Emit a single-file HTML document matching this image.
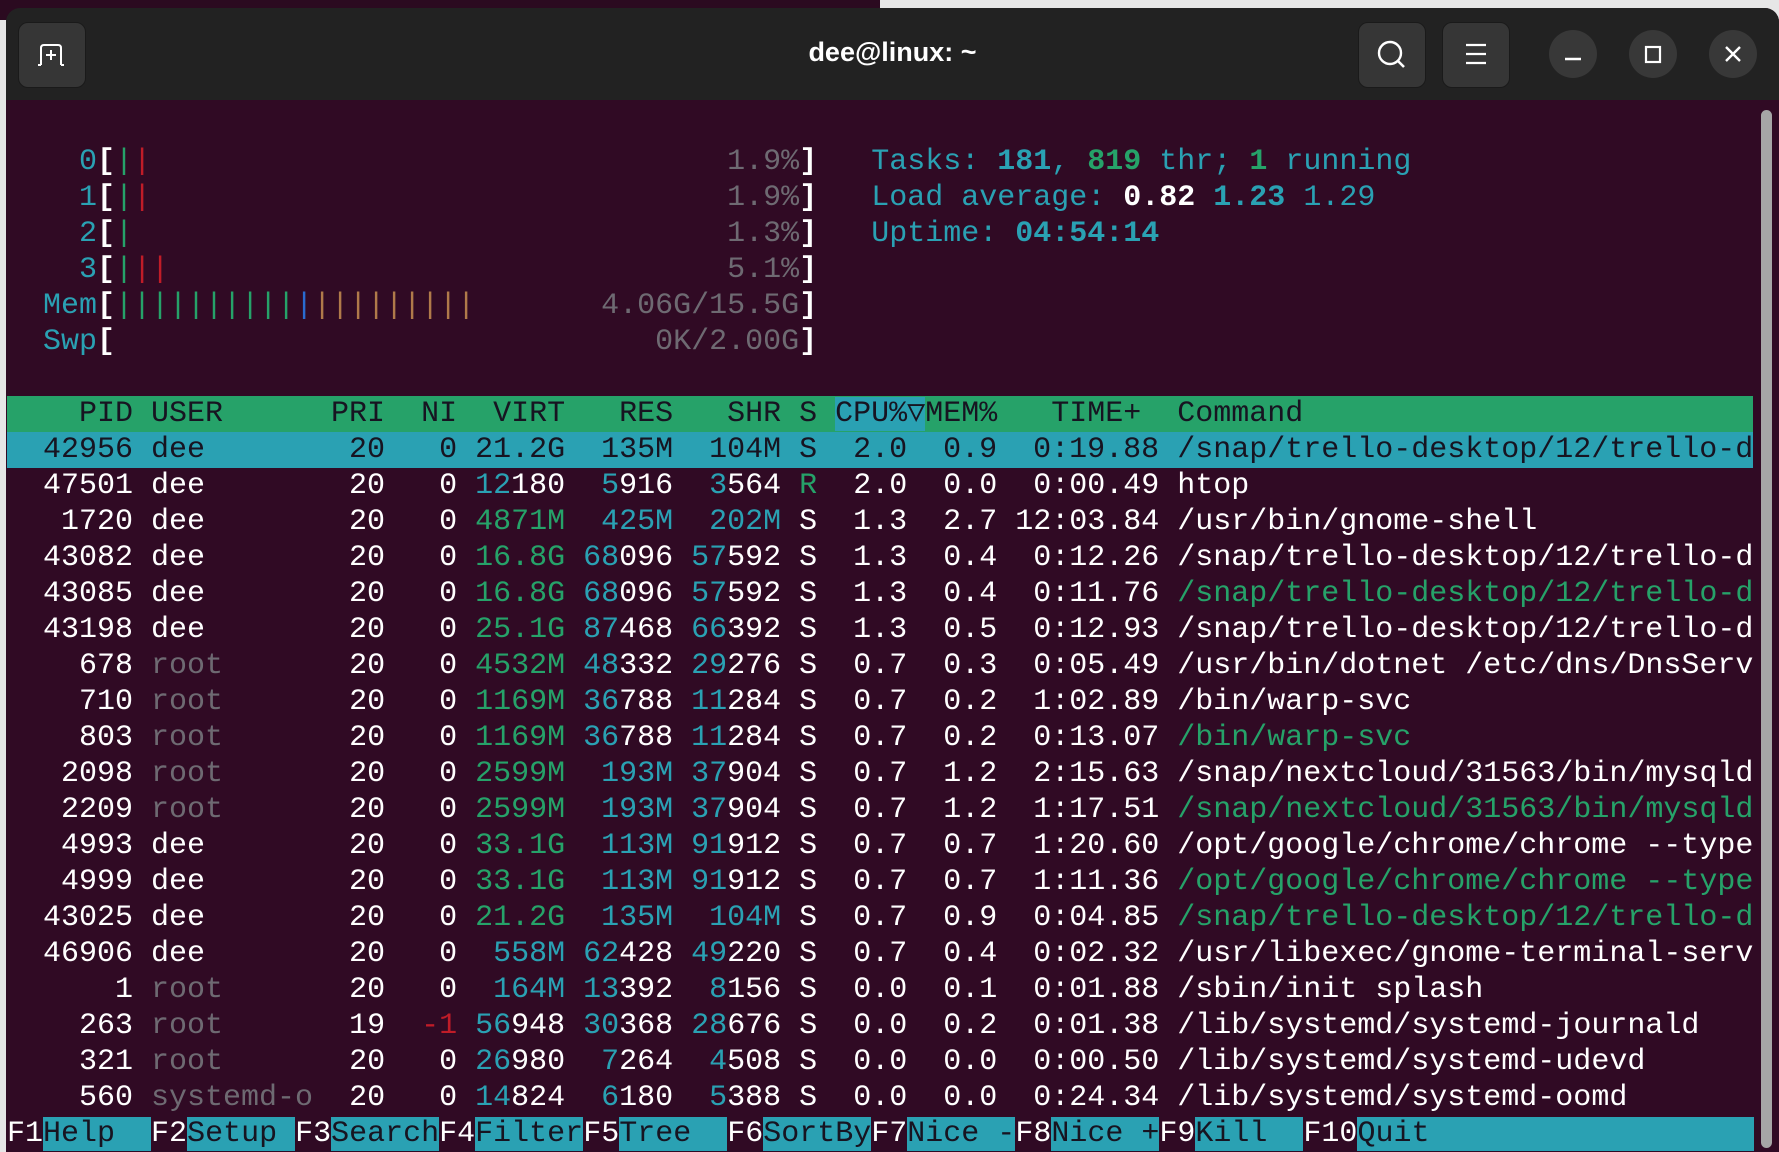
<!DOCTYPE html>
<html><head><meta charset="utf-8">
<style>
html,body{margin:0;padding:0;width:1779px;height:1152px;overflow:hidden;background:#e6e6e6;}
#desk{position:absolute;left:0;top:0;width:880px;height:20px;background:#2b0a20;}
#win{position:absolute;left:6px;top:8px;width:1773px;height:1144px;background:#300a24;border-radius:14px 14px 0 0;overflow:hidden;}
#tb{position:absolute;left:0;top:0;width:100%;height:92px;background:#222222;}
.btn{position:absolute;top:14px;width:66px;height:64px;background:#363636;border-radius:10px;border:1px solid #1a1a1a;}
.circ{position:absolute;top:22px;width:48px;height:48px;border-radius:50%;background:#383838;}
#title{position:absolute;left:0;width:100%;top:29px;text-align:center;color:#fff;font:bold 27px "Liberation Sans",sans-serif;}
#term{position:absolute;left:1px;top:136px;font-family:"Liberation Mono",monospace;font-size:30px;line-height:36px;color:#fff;}
.l{height:36px;width:1746px;white-space:pre;}
.c{color:#2aa1b3}.g{color:#26a269}.r{color:#c01c28}.k{color:#6e6a72}.b{color:#2a6bd0}.o{color:#b07a4a}.w{color:#fff;font-weight:bold}
.hd{background:#26a269;color:#171421}
.sel{background:#2aa1b3;color:#171421}
.cy{background:#2aa1b3;color:#171421}
.f{color:#fff}
#sb{position:absolute;left:1755px;top:102px;width:11px;height:1038px;background:#a6a6a6;border-radius:6px;}
</style></head><body>
<div id="desk"></div>
<div id="win">
 <div id="tb">
  <div class="btn" style="left:12px;"><svg width="66" height="64" viewBox="0 0 66 64"><path d="M22 42 V25 Q22 22 25 22 H39 Q42 22 42 25 V42 M19 42 H22 M42 42 H45 M32 27 V37 M27 32 H37" stroke="#fff" stroke-width="2" fill="none"/></svg></div>
  <div id="title">dee@linux: ~</div>
  <div class="btn" style="left:1352px;"><svg width="66" height="64" viewBox="0 0 66 64"><circle cx="31" cy="30" r="11" stroke="#fff" stroke-width="2.4" fill="none"/><path d="M39 38 L45 44" stroke="#fff" stroke-width="2.6"/></svg></div>
  <div class="btn" style="left:1436px;"><svg width="66" height="64" viewBox="0 0 66 64"><path d="M23 22 H43 M23 31 H43 M23 40 H43" stroke="#fff" stroke-width="2.2"/></svg></div>
  <div class="circ" style="left:1543px;"><svg width="48" height="48"><path d="M16 29 H32" stroke="#fff" stroke-width="2.4"/></svg></div>
  <div class="circ" style="left:1623px;"><svg width="48" height="48"><rect x="17" y="17" width="14" height="15" stroke="#fff" stroke-width="2.2" fill="none"/></svg></div>
  <div class="circ" style="left:1703px;"><svg width="48" height="48"><path d="M17 17 L31 31 M31 17 L17 31" stroke="#fff" stroke-width="2.4"/></svg></div>
 </div>
 <div id="sb"></div>
 <div id="term"><div class="l">    <span class="c">0</span><span class="w">[</span><span class="g">|</span><span class="r">|</span>                                <span class="k">1.9%</span><span class="w">]</span>   <span class="c">Tasks: </span><span class="c" style="font-weight:bold">181</span><span class="c">, </span><span class="g" style="font-weight:bold">819</span><span class="c"> thr; </span><span class="g" style="font-weight:bold">1</span><span class="c"> running</span></div><div class="l">    <span class="c">1</span><span class="w">[</span><span class="g">|</span><span class="r">|</span>                                <span class="k">1.9%</span><span class="w">]</span>   <span class="c">Load average: </span><span class="w">0.82</span> <span class="c" style="font-weight:bold">1.23</span> <span class="c">1.29</span></div><div class="l">    <span class="c">2</span><span class="w">[</span><span class="g">|</span>                                 <span class="k">1.3%</span><span class="w">]</span>   <span class="c">Uptime: </span><span class="c" style="font-weight:bold">04:54:14</span></div><div class="l">    <span class="c">3</span><span class="w">[</span><span class="g">|</span><span class="r">||</span>                               <span class="k">5.1%</span><span class="w">]</span></div><div class="l">  <span class="c">Mem</span><span class="w">[</span><span class="g">||||||||||</span><span class="b">|</span><span class="o">|||||||||</span>       <span class="k">4.06G/15.5G</span><span class="w">]</span></div><div class="l">  <span class="c">Swp</span><span class="w">[</span>                              <span class="k">0K/2.00G</span><span class="w">]</span></div><div class="l"> </div><div class="l hd">    PID USER      PRI  NI  VIRT   RES   SHR S <span class="cy">CPU%▽</span>MEM%   TIME+  Command                          </div><div class="l sel">  42956 dee        20   0 21.2G  135M  104M S  2.0  0.9  0:19.88 /snap/trello-desktop/12/trello-d</div><div class="l">  47501 dee        20   0 <span class="c">12</span>180  <span class="c">5</span>916  <span class="c">3</span>564 <span class="g">R</span>  2.0  0.0  0:00.49 htop</div><div class="l">   1720 dee        20   0 <span class="g">4871M</span>  <span class="c">425M</span>  <span class="c">202M</span> S  1.3  2.7 12:03.84 /usr/bin/gnome-shell</div><div class="l">  43082 dee        20   0 <span class="g">16.8G</span> <span class="c">68</span>096 <span class="c">57</span>592 S  1.3  0.4  0:12.26 /snap/trello-desktop/12/trello-d</div><div class="l">  43085 dee        20   0 <span class="g">16.8G</span> <span class="c">68</span>096 <span class="c">57</span>592 S  1.3  0.4  0:11.76 <span class="g">/snap/trello-desktop/12/trello-d</span></div><div class="l">  43198 dee        20   0 <span class="g">25.1G</span> <span class="c">87</span>468 <span class="c">66</span>392 S  1.3  0.5  0:12.93 /snap/trello-desktop/12/trello-d</div><div class="l">    678 <span class="k">root</span>       20   0 <span class="g">4532M</span> <span class="c">48</span>332 <span class="c">29</span>276 S  0.7  0.3  0:05.49 /usr/bin/dotnet /etc/dns/DnsServ</div><div class="l">    710 <span class="k">root</span>       20   0 <span class="g">1169M</span> <span class="c">36</span>788 <span class="c">11</span>284 S  0.7  0.2  1:02.89 /bin/warp-svc</div><div class="l">    803 <span class="k">root</span>       20   0 <span class="g">1169M</span> <span class="c">36</span>788 <span class="c">11</span>284 S  0.7  0.2  0:13.07 <span class="g">/bin/warp-svc</span></div><div class="l">   2098 <span class="k">root</span>       20   0 <span class="g">2599M</span>  <span class="c">193M</span> <span class="c">37</span>904 S  0.7  1.2  2:15.63 /snap/nextcloud/31563/bin/mysqld</div><div class="l">   2209 <span class="k">root</span>       20   0 <span class="g">2599M</span>  <span class="c">193M</span> <span class="c">37</span>904 S  0.7  1.2  1:17.51 <span class="g">/snap/nextcloud/31563/bin/mysqld</span></div><div class="l">   4993 dee        20   0 <span class="g">33.1G</span>  <span class="c">113M</span> <span class="c">91</span>912 S  0.7  0.7  1:20.60 /opt/google/chrome/chrome --type</div><div class="l">   4999 dee        20   0 <span class="g">33.1G</span>  <span class="c">113M</span> <span class="c">91</span>912 S  0.7  0.7  1:11.36 <span class="g">/opt/google/chrome/chrome --type</span></div><div class="l">  43025 dee        20   0 <span class="g">21.2G</span>  <span class="c">135M</span>  <span class="c">104M</span> S  0.7  0.9  0:04.85 <span class="g">/snap/trello-desktop/12/trello-d</span></div><div class="l">  46906 dee        20   0  <span class="c">558M</span> <span class="c">62</span>428 <span class="c">49</span>220 S  0.7  0.4  0:02.32 /usr/libexec/gnome-terminal-serv</div><div class="l">      1 <span class="k">root</span>       20   0  <span class="c">164M</span> <span class="c">13</span>392  <span class="c">8</span>156 S  0.0  0.1  0:01.88 /sbin/init splash</div><div class="l">    263 <span class="k">root</span>       19  <span class="r">-1</span> <span class="c">56</span>948 <span class="c">30</span>368 <span class="c">28</span>676 S  0.0  0.2  0:01.38 /lib/systemd/systemd-journald</div><div class="l">    321 <span class="k">root</span>       20   0 <span class="c">26</span>980  <span class="c">7</span>264  <span class="c">4</span>508 S  0.0  0.0  0:00.50 /lib/systemd/systemd-udevd</div><div class="l">    560 <span class="k">systemd-o</span>  20   0 <span class="c">14</span>824  <span class="c">6</span>180  <span class="c">5</span>388 S  0.0  0.0  0:24.34 /lib/systemd/systemd-oomd</div><div class="l"><span class="f">F1</span><span class="cy">Help  </span><span class="f">F2</span><span class="cy">Setup </span><span class="f">F3</span><span class="cy">Search</span><span class="f">F4</span><span class="cy">Filter</span><span class="f">F5</span><span class="cy">Tree  </span><span class="f">F6</span><span class="cy">SortBy</span><span class="f">F7</span><span class="cy">Nice -</span><span class="f">F8</span><span class="cy">Nice +</span><span class="f">F9</span><span class="cy">Kill  </span><span class="f">F10</span><span class="cy">Quit                  </span></div></div>
</div>
</body></html>
